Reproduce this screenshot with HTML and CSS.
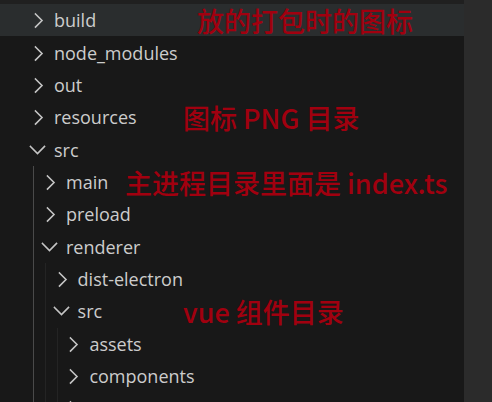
FILE: index.html
```html
<!DOCTYPE html>
<html>
<head>
<meta charset="utf-8">
<link rel="stylesheet" href="styles.css">
</head>
<body>
<div class="screen">
  <div class="explorer">
    <div class="topbar"></div>
    <div class="tree">
      <div class="row selected lvl0">
        <svg class="chev" viewBox="0 0 20 20"><polyline points="6.5,4 13,10.5 6.5,17"/></svg>
        <span class="name">build</span>
        <span class="note note-build">放的打包时的图标</span>
      </div>
      <div class="row lvl0">
        <svg class="chev" viewBox="0 0 20 20"><polyline points="6.5,4 13,10.5 6.5,17"/></svg>
        <span class="name">node_modules</span>
      </div>
      <div class="row lvl0">
        <svg class="chev" viewBox="0 0 20 20"><polyline points="6.5,4 13,10.5 6.5,17"/></svg>
        <span class="name">out</span>
      </div>
      <div class="row lvl0">
        <svg class="chev" viewBox="0 0 20 20"><polyline points="6.5,4 13,10.5 6.5,17"/></svg>
        <span class="name">resources</span>
        <span class="note note-res">图标 PNG 目录</span>
      </div>
      <div class="row lvl0">
        <svg class="chev down" viewBox="0 0 20 20"><polyline points="1.5,6.5 8.5,13.5 15.5,6.5"/></svg>
        <span class="name">src</span>
      </div>
      <div class="group g1">
        <div class="row lvl1">
          <svg class="chev" viewBox="0 0 20 20"><polyline points="6.5,4 13,10.5 6.5,17"/></svg>
          <span class="name">main</span>
          <span class="note note-main">主进程目录里面是 index.ts</span>
        </div>
        <div class="row lvl1">
          <svg class="chev" viewBox="0 0 20 20"><polyline points="6.5,4 13,10.5 6.5,17"/></svg>
          <span class="name">preload</span>
        </div>
        <div class="row lvl1">
          <svg class="chev down" viewBox="0 0 20 20"><polyline points="1.5,6.5 8.5,13.5 15.5,6.5"/></svg>
          <span class="name">renderer</span>
        </div>
        <div class="group g2">
          <div class="row lvl2">
            <svg class="chev" viewBox="0 0 20 20"><polyline points="6.5,4 13,10.5 6.5,17"/></svg>
            <span class="name">dist-electron</span>
          </div>
          <div class="row lvl2">
            <svg class="chev down" viewBox="0 0 20 20"><polyline points="1.5,6.5 8.5,13.5 15.5,6.5"/></svg>
            <span class="name">src</span>
            <span class="note note-vue">vue 组件目录</span>
          </div>
          <div class="group g3">
            <div class="row lvl3">
              <svg class="chev" viewBox="0 0 20 20"><polyline points="6.5,4 13,10.5 6.5,17"/></svg>
              <span class="name">assets</span>
            </div>
            <div class="row lvl3">
              <svg class="chev" viewBox="0 0 20 20"><polyline points="6.5,4 13,10.5 6.5,17"/></svg>
              <span class="name">components</span>
            </div>
            <div class="row lvl3">
              <svg class="chev" viewBox="0 0 20 20"><polyline points="6.5,4 13,10.5 6.5,17"/></svg>
            </div>
          </div>
        </div>
      </div>
    </div>
  </div>
  <div class="sidebar-edge"></div>
</div>
</body>
</html>
```

FILE: styles.css
```css
html, body {
  margin: 0;
  padding: 0;
  background: #181818;
  overflow: hidden;
}

.screen {
  display: flex;
  width: 492px;
  height: 402px;
  overflow: hidden;
}

.explorer {
  width: 464px;
  flex: none;
  background: #181818;
  display: flex;
  flex-direction: column;
}

.topbar {
  height: 4px;
  flex: none;
  background: #202020;
}

.sidebar-edge {
  flex: 1;
  background: #2b2b2b;
}

.tree {
  display: flex;
  flex-direction: column;
}

.group {
  position: relative;
}

.group::before {
  content: "";
  position: absolute;
  top: 0;
  bottom: 0;
  width: 1px;
  background: #242424;
}

.g1::before {
  left: 33px;
  background: #4a4a4a;
}

.g2::before {
  left: 45px;
}

.g3::before {
  left: 57px;
}

.row {
  position: relative;
  height: 32.36px;
  display: flex;
  align-items: center;
  font-family: "Open Sans", "Noto Sans", sans-serif;
  font-size: 18px;
  color: #cccccc;
  white-space: nowrap;
}

.row.selected {
  background: #2a2d2e;
}

.lvl0 { padding-left: 29px; }
.lvl1 { padding-left: 41px; }
.lvl2 { padding-left: 52.6px; }
.lvl3 { padding-left: 64.4px; }

.chev {
  width: 20px;
  height: 20px;
  flex: none;
  fill: none;
  stroke: #c5c5c5;
  stroke-width: 1.6;
  stroke-linecap: square;
}

.name {
  margin-left: 5px;
  line-height: 1;
}

.note {
  position: absolute;
  top: 50%;
  transform: translateY(-50%);
  font-family: "Noto Sans CJK SC", "Noto Sans", sans-serif;
  font-size: 27px;
  font-weight: 500;
  line-height: 1;
  color: #a1000f;
}

.note-build { left: 197px; }
.note-res { left: 183px; }
.note-main { left: 125px; }
.note-vue { left: 183px; }
```
